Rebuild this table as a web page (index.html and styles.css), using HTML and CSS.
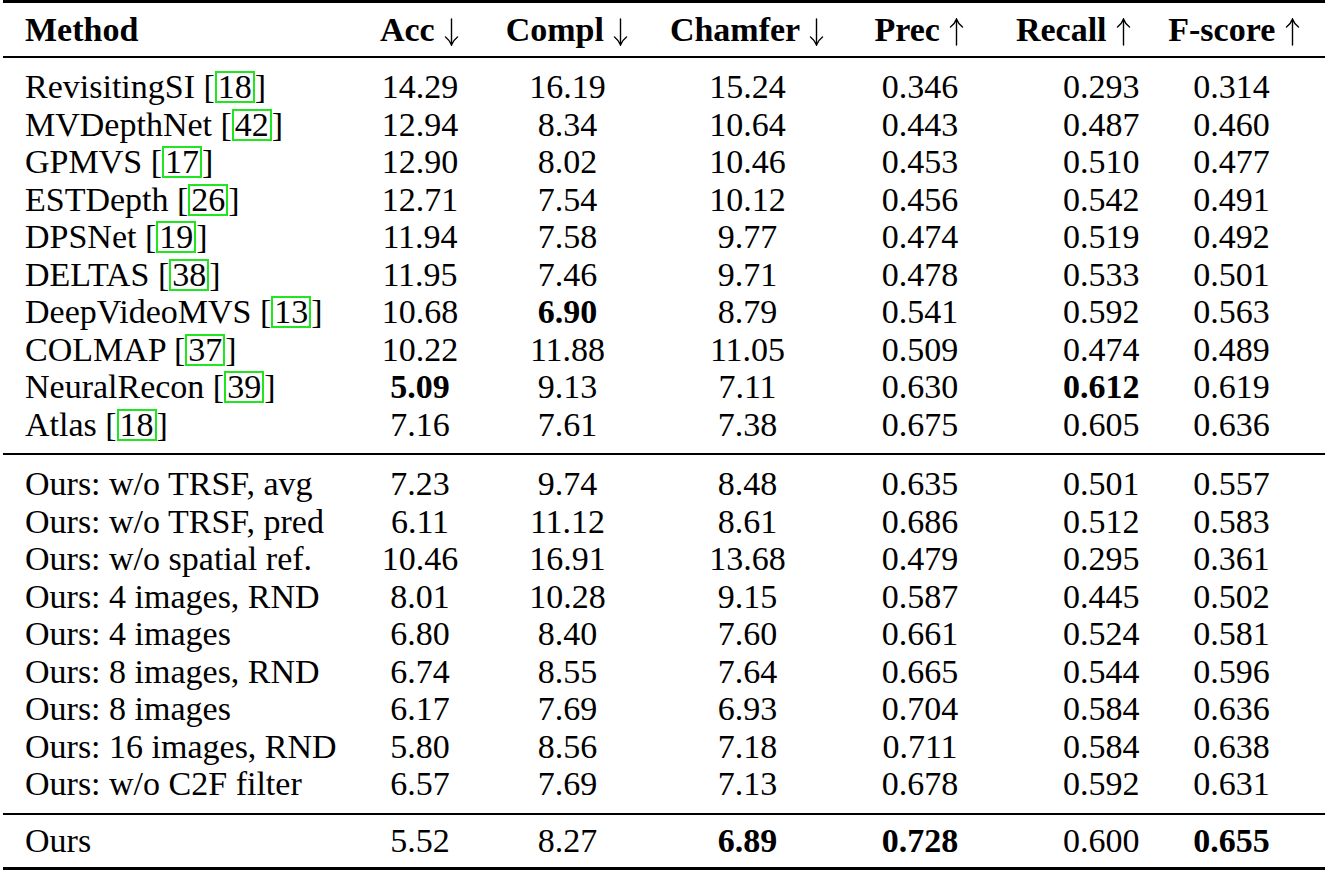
FILE: index.html
```html
<!DOCTYPE html>
<html>
<head>
<meta charset="utf-8">
<link rel="stylesheet" href="styles.css">
</head>
<body>
<div class="table">
  <div class="rule thick"></div>
  <div class="row head">
    <div class="c m">Method</div>
    <div class="c">Acc <svg class="arr" viewBox="0 0 17 28" width="17" height="28"><path d="M8.5 1V26.5M2.5 19C5.3 21.2 7.4 23.8 8.5 27C9.6 23.8 11.7 21.2 14.5 19" /></svg></div>
    <div class="c">Compl <svg class="arr" viewBox="0 0 17 28" width="17" height="28"><path d="M8.5 1V26.5M2.5 19C5.3 21.2 7.4 23.8 8.5 27C9.6 23.8 11.7 21.2 14.5 19" /></svg></div>
    <div class="c">Chamfer <svg class="arr" viewBox="0 0 17 28" width="17" height="28"><path d="M8.5 1V26.5M2.5 19C5.3 21.2 7.4 23.8 8.5 27C9.6 23.8 11.7 21.2 14.5 19" /></svg></div>
    <div class="c">Prec <svg class="arr" viewBox="0 0 17 28" width="17" height="28"><path d="M8.5 27V1.5M2.5 9C5.3 6.8 7.4 4.2 8.5 1C9.6 4.2 11.7 6.8 14.5 9" /></svg></div>
    <div class="c">Recall <svg class="arr" viewBox="0 0 17 28" width="17" height="28"><path d="M8.5 27V1.5M2.5 9C5.3 6.8 7.4 4.2 8.5 1C9.6 4.2 11.7 6.8 14.5 9" /></svg></div>
    <div class="c">F-score <svg class="arr" viewBox="0 0 17 28" width="17" height="28"><path d="M8.5 27V1.5M2.5 9C5.3 6.8 7.4 4.2 8.5 1C9.6 4.2 11.7 6.8 14.5 9" /></svg></div>
  </div>
  <div class="rule"></div>
  <div class="group">
    <div class="row"><div class="c m">RevisitingSI [<span class="cite">18</span>]</div><div class="c">14.29</div><div class="c">16.19</div><div class="c">15.24</div><div class="c">0.346</div><div class="c">0.293</div><div class="c">0.314</div></div>
    <div class="row"><div class="c m">MVDepthNet [<span class="cite">42</span>]</div><div class="c">12.94</div><div class="c">8.34</div><div class="c">10.64</div><div class="c">0.443</div><div class="c">0.487</div><div class="c">0.460</div></div>
    <div class="row"><div class="c m">GPMVS [<span class="cite">17</span>]</div><div class="c">12.90</div><div class="c">8.02</div><div class="c">10.46</div><div class="c">0.453</div><div class="c">0.510</div><div class="c">0.477</div></div>
    <div class="row"><div class="c m">ESTDepth [<span class="cite">26</span>]</div><div class="c">12.71</div><div class="c">7.54</div><div class="c">10.12</div><div class="c">0.456</div><div class="c">0.542</div><div class="c">0.491</div></div>
    <div class="row"><div class="c m">DPSNet [<span class="cite">19</span>]</div><div class="c">11.94</div><div class="c">7.58</div><div class="c">9.77</div><div class="c">0.474</div><div class="c">0.519</div><div class="c">0.492</div></div>
    <div class="row"><div class="c m">DELTAS [<span class="cite">38</span>]</div><div class="c">11.95</div><div class="c">7.46</div><div class="c">9.71</div><div class="c">0.478</div><div class="c">0.533</div><div class="c">0.501</div></div>
    <div class="row"><div class="c m">DeepVideoMVS [<span class="cite">13</span>]</div><div class="c">10.68</div><div class="c b">6.90</div><div class="c">8.79</div><div class="c">0.541</div><div class="c">0.592</div><div class="c">0.563</div></div>
    <div class="row"><div class="c m">COLMAP [<span class="cite">37</span>]</div><div class="c">10.22</div><div class="c">11.88</div><div class="c">11.05</div><div class="c">0.509</div><div class="c">0.474</div><div class="c">0.489</div></div>
    <div class="row"><div class="c m">NeuralRecon [<span class="cite">39</span>]</div><div class="c b">5.09</div><div class="c">9.13</div><div class="c">7.11</div><div class="c">0.630</div><div class="c b">0.612</div><div class="c">0.619</div></div>
    <div class="row"><div class="c m">Atlas [<span class="cite">18</span>]</div><div class="c">7.16</div><div class="c">7.61</div><div class="c">7.38</div><div class="c">0.675</div><div class="c">0.605</div><div class="c">0.636</div></div>
  </div>
  <div class="rule"></div>
  <div class="group">
    <div class="row"><div class="c m">Ours: w/o TRSF, avg</div><div class="c">7.23</div><div class="c">9.74</div><div class="c">8.48</div><div class="c">0.635</div><div class="c">0.501</div><div class="c">0.557</div></div>
    <div class="row"><div class="c m">Ours: w/o TRSF, pred</div><div class="c">6.11</div><div class="c">11.12</div><div class="c">8.61</div><div class="c">0.686</div><div class="c">0.512</div><div class="c">0.583</div></div>
    <div class="row"><div class="c m">Ours: w/o spatial ref.</div><div class="c">10.46</div><div class="c">16.91</div><div class="c">13.68</div><div class="c">0.479</div><div class="c">0.295</div><div class="c">0.361</div></div>
    <div class="row"><div class="c m">Ours: 4 images, RND</div><div class="c">8.01</div><div class="c">10.28</div><div class="c">9.15</div><div class="c">0.587</div><div class="c">0.445</div><div class="c">0.502</div></div>
    <div class="row"><div class="c m">Ours: 4 images</div><div class="c">6.80</div><div class="c">8.40</div><div class="c">7.60</div><div class="c">0.661</div><div class="c">0.524</div><div class="c">0.581</div></div>
    <div class="row"><div class="c m">Ours: 8 images, RND</div><div class="c">6.74</div><div class="c">8.55</div><div class="c">7.64</div><div class="c">0.665</div><div class="c">0.544</div><div class="c">0.596</div></div>
    <div class="row"><div class="c m">Ours: 8 images</div><div class="c">6.17</div><div class="c">7.69</div><div class="c">6.93</div><div class="c">0.704</div><div class="c">0.584</div><div class="c">0.636</div></div>
    <div class="row"><div class="c m">Ours: 16 images, RND</div><div class="c">5.80</div><div class="c">8.56</div><div class="c">7.18</div><div class="c">0.711</div><div class="c">0.584</div><div class="c">0.638</div></div>
    <div class="row"><div class="c m">Ours: w/o C2F filter</div><div class="c">6.57</div><div class="c">7.69</div><div class="c">7.13</div><div class="c">0.678</div><div class="c">0.592</div><div class="c">0.631</div></div>
  </div>
  <div class="rule"></div>
  <div class="group last">
    <div class="row"><div class="c m">Ours</div><div class="c">5.52</div><div class="c">8.27</div><div class="c b">6.89</div><div class="c b">0.728</div><div class="c">0.600</div><div class="c b">0.655</div></div>
  </div>
  <div class="rule thick"></div>
</div>
</body>
</html>
```

FILE: styles.css
```css
html, body {
  margin: 0;
  padding: 0;
  background: #ffffff;
}

body {
  font-family: "Liberation Serif", "Tinos", "Times New Roman", "Nimbus Roman", "DejaVu Serif", serif;
  font-size: 34px;
  color: #000000;
}

.table {
  width: 1322px;
  margin-left: 3px;
}

.rule {
  height: 2px;
  background: #000000;
}

.rule.thick {
  height: 3px;
}

.row {
  display: grid;
  grid-template-columns: 367px 100px 195px 165px 180px 128px 187px;
  height: 37.5px;
  line-height: 37.5px;
}

.row.head {
  height: 53px;
  line-height: 53px;
  font-weight: bold;
}

.group {
  padding: 10px 0 10px;
}

.group.last {
  padding: 7px 0 7.5px;
}

.c {
  text-align: center;
  white-space: nowrap;
}

.group .row .c:nth-child(6) {
  text-align: left;
  padding-left: 53px;
}

.row.head .c:last-child {
  padding-left: 6px;
}

.c.m {
  text-align: left;
  padding-left: 22px;
}

.b {
  font-weight: bold;
}

.arr {
  vertical-align: -5px;
}

.arr path {
  fill: none;
  stroke: #000000;
  stroke-width: 1.4;
  stroke-linecap: round;
}

.cite {
  display: inline-block;
  border: 2px solid #1fe61f;
  line-height: 28px;
  padding: 0 1px;
}
```
